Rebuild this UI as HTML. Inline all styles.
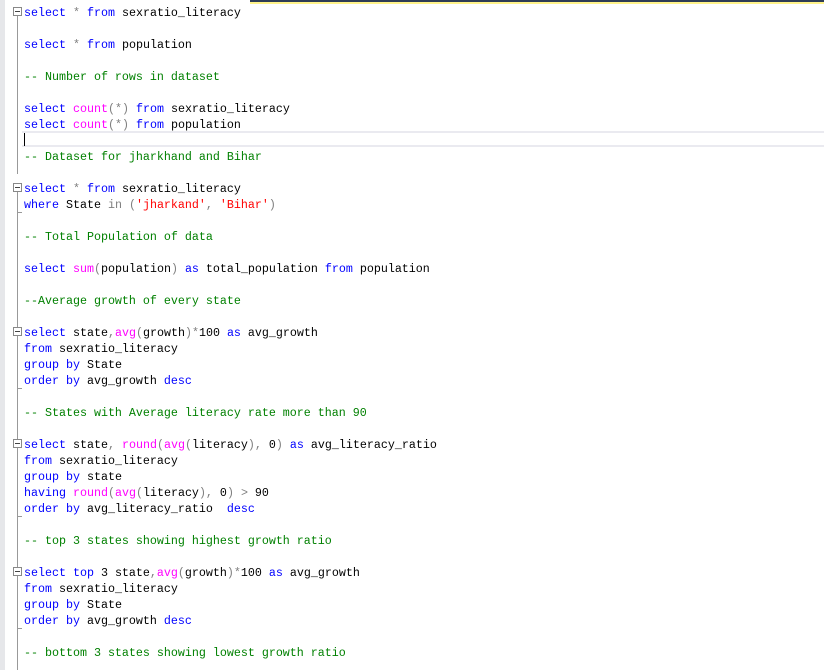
<!DOCTYPE html>
<html><head><meta charset="utf-8"><style>
body{margin:0;width:824px;height:670px;background:#fff;position:relative;overflow:hidden}
#code{position:absolute;left:24px;top:5px;font-family:"Liberation Mono",monospace;font-size:11.67px;line-height:16px;white-space:pre;color:#000}
.k{color:#0000ff}.f{color:#ff00ff}.o{color:#808080}.c{color:#008000}.s{color:#ff0000}
.box{position:absolute;left:13px;width:7px;height:7px;border:1px solid #888;background:#fff}
.box:after{content:"";position:absolute;left:1px;top:3px;width:5px;height:1px;background:#444}
.vl{position:absolute;left:17px;width:1px;background:#999}
.tk{position:absolute;left:17px;width:5px;height:1px;background:#999}
</style></head><body>
<div style="position:absolute;left:0;top:0;width:5px;height:670px;background:#e6e7ea"></div>
<div style="position:absolute;left:250px;top:0;width:574px;height:2px;background:#2e3c55"></div>
<div style="position:absolute;left:250px;top:2px;width:574px;height:2px;background:#fff38a"></div>
<div style="position:absolute;left:22px;top:131px;width:802px;height:16px;border-top:2px solid #eaeaf0;border-bottom:2px solid #eaeaf0;box-sizing:border-box"></div>
<div style="position:absolute;left:24px;top:133px;width:1px;height:13px;background:#000"></div>
<div class="box" style="top:7px"></div><div class="vl" style="top:16px;height:158px"></div>
<div class="box" style="top:183px"></div><div class="vl" style="top:192px;height:20px"></div><div class="tk" style="top:212px"></div>
<div class="vl" style="top:212px;height:115px"></div>
<div class="box" style="top:327px"></div><div class="vl" style="top:336px;height:52px"></div><div class="tk" style="top:388px"></div>
<div class="vl" style="top:388px;height:51px"></div>
<div class="box" style="top:439px"></div><div class="vl" style="top:448px;height:68px"></div><div class="tk" style="top:516px"></div>
<div class="vl" style="top:516px;height:51px"></div>
<div class="box" style="top:567px"></div><div class="vl" style="top:576px;height:52px"></div><div class="tk" style="top:628px"></div>
<div class="vl" style="top:628px;height:42px"></div>
<div id="code"><span class="k">select</span> <span class="o">*</span> <span class="k">from</span> sexratio_literacy

<span class="k">select</span> <span class="o">*</span> <span class="k">from</span> population

<span class="c">-- Number of rows in dataset</span>

<span class="k">select</span> <span class="f">count</span><span class="o">(*)</span> <span class="k">from</span> sexratio_literacy
<span class="k">select</span> <span class="f">count</span><span class="o">(*)</span> <span class="k">from</span> population

<span class="c">-- Dataset for jharkhand and Bihar</span>

<span class="k">select</span> <span class="o">*</span> <span class="k">from</span> sexratio_literacy
<span class="k">where</span> State <span class="o">in</span> <span class="o">(</span><span class="s">'jharkand'</span><span class="o">,</span> <span class="s">'Bihar'</span><span class="o">)</span>

<span class="c">-- Total Population of data</span>

<span class="k">select</span> <span class="f">sum</span><span class="o">(</span>population<span class="o">)</span> <span class="k">as</span> total_population <span class="k">from</span> population

<span class="c">--Average growth of every state</span>

<span class="k">select</span> state<span class="o">,</span><span class="f">avg</span><span class="o">(</span>growth<span class="o">)*</span>100 <span class="k">as</span> avg_growth
<span class="k">from</span> sexratio_literacy
<span class="k">group by</span> State
<span class="k">order by</span> avg_growth <span class="k">desc</span>

<span class="c">-- States with Average literacy rate more than 90</span>

<span class="k">select</span> state<span class="o">,</span> <span class="f">round</span><span class="o">(</span><span class="f">avg</span><span class="o">(</span>literacy<span class="o">),</span> 0<span class="o">)</span> <span class="k">as</span> avg_literacy_ratio
<span class="k">from</span> sexratio_literacy
<span class="k">group by</span> state
<span class="k">having</span> <span class="f">round</span><span class="o">(</span><span class="f">avg</span><span class="o">(</span>literacy<span class="o">),</span> 0<span class="o">)</span> <span class="o">&gt;</span> 90
<span class="k">order by</span> avg_literacy_ratio  <span class="k">desc</span>

<span class="c">-- top 3 states showing highest growth ratio</span>

<span class="k">select top</span> 3 state<span class="o">,</span><span class="f">avg</span><span class="o">(</span>growth<span class="o">)*</span>100 <span class="k">as</span> avg_growth
<span class="k">from</span> sexratio_literacy
<span class="k">group by</span> State
<span class="k">order by</span> avg_growth <span class="k">desc</span>

<span class="c">-- bottom 3 states showing lowest growth ratio</span></div>
</body></html>
